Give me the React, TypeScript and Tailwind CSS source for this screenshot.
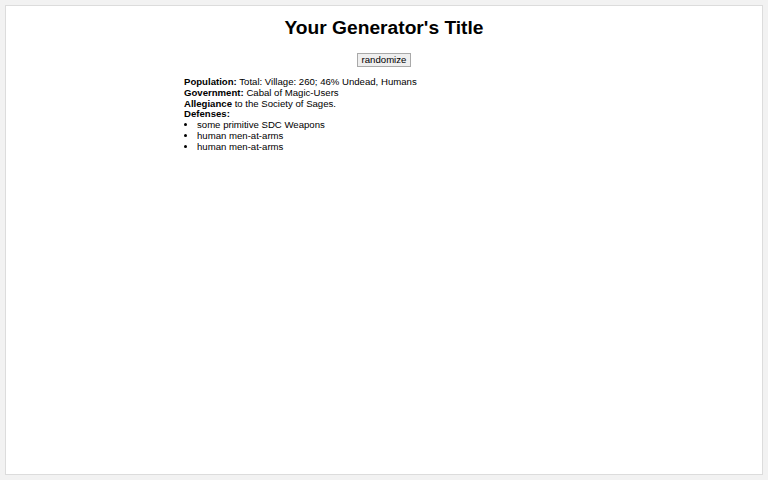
import React from 'react';

const defenses = ['some primitive SDC Weapons', 'human men-at-arms', 'human men-at-arms'];

const App = () => {
  return (
    <div className="h-[480px] bg-[#f2f2f2] p-[5px] font-['Liberation_Sans',Arial,sans-serif] text-black">
      <div className="h-full border border-[#dcdcdc] bg-white">
        <h1 className="pt-[10px] text-center text-[19.2px] font-bold leading-[23px]">
          Your Generator&apos;s Title
        </h1>
        <div className="mt-[14px] flex justify-center">
          <button className="border border-[#a9a9a9] bg-[#efefef] px-[4px] text-[9.6px] leading-[12px]">
            randomize
          </button>
        </div>
        <div className="mx-auto mt-[10px] w-[400px] text-[9.6px] leading-[10.8px]">
          <div>
            <b>Population:</b> Total: Village: 260; 46% Undead, Humans
          </div>
          <div>
            <b>Government:</b> Cabal of Magic-Users
          </div>
          <div>
            <b>Allegiance</b> to the Society of Sages.
          </div>
          <div>
            <b>Defenses:</b>
          </div>
          <ul className="list-disc pl-[13px]">
            {defenses.map((d, i) => (
              <li key={i}>{d}</li>
            ))}
          </ul>
        </div>
      </div>
    </div>
  );
};

export default App;
